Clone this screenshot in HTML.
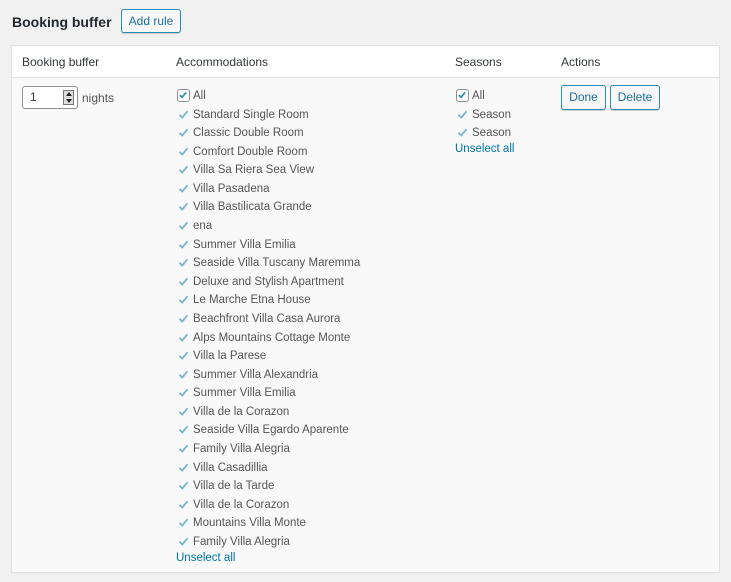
<!DOCTYPE html>
<html><head><meta charset="utf-8"><style>
*{box-sizing:border-box}
body{margin:0;width:731px;height:582px;background:#f1f1f1;font-family:"Liberation Sans",sans-serif;color:#444;position:relative;overflow:hidden}
.a{position:absolute;white-space:nowrap}
h1{position:absolute;left:12px;top:14px;margin:0;font-size:14px;font-weight:bold;color:#23282d;white-space:nowrap}
.btn{position:absolute;border:1px solid #2a8bb5;border-radius:3px;color:#1a6f98;background:#f7f7f7;font-size:12px;text-align:center;line-height:22px;box-shadow:0 1px 0 #ccc;white-space:nowrap}
.tbl{position:absolute;left:11px;top:45px;width:709px;height:528px;border:1px solid #e1e1e1;background:#f9f9f9;box-shadow:0 1px 1px rgba(0,0,0,.04)}
.hd{position:absolute;left:0;top:0;width:707px;height:32px;background:#fff;border-bottom:1px solid #e1e1e1}
.th{position:absolute;top:9px;font-size:12px;color:#32373c;white-space:nowrap}
.it{position:absolute;font-size:11.5px;color:#555;height:18px;line-height:18px;white-space:nowrap}
.cb{position:absolute;left:0;top:2px;width:13px;height:13px}
.cb.on{border:1px solid #8c8f94;border-radius:3px;background:#fff}
.it span{position:absolute;left:16px;white-space:nowrap}
.lnk{position:absolute;font-size:11.5px;color:#0073aa;white-space:nowrap}
</style></head><body>
<h1>Booking buffer</h1>
<div class="btn" style="left:121px;top:9px;width:60px;height:24px">Add rule</div>
<div class="tbl">
<div class="hd">
<div class="th" style="left:10px">Booking buffer</div>
<div class="th" style="left:164px">Accommodations</div>
<div class="th" style="left:443px">Seasons</div>
<div class="th" style="left:549px">Actions</div>
</div>
</div>
<div class="a" style="left:22px;top:86px;width:56px;height:23px;border:1px solid #8c8f94;border-radius:3px;background:#fff;font-size:12px;padding:3px 0 0 7px;color:#32373c">1
<div style="position:absolute;right:3px;top:3px;width:11px;height:15px;border:1px solid #777;background:#ddd">
<div style="position:absolute;left:2px;top:1px;border:3px solid transparent;border-bottom:4px solid #222;border-top:0"></div>
<div style="position:absolute;left:2px;top:8px;border:3px solid transparent;border-top:4px solid #222;border-bottom:0"></div>
</div></div>
<div class="a" style="left:82px;top:91px;font-size:12px;color:#555">nights</div>
<div id="acc"></div>
<div class="lnk" style="left:176px;top:552px">Unselect all</div>
<div class="lnk" style="left:455px;top:143px">Unselect all</div>
<div class="btn" style="left:561px;top:85px;width:45px;height:25px;line-height:23px">Done</div>
<div class="btn" style="left:610px;top:85px;width:50px;height:25px;line-height:23px">Delete</div>
<script>
var chk='<svg class="cb" viewBox="0 0 13 13"><path d="M2.5 6.8 L5.3 9.5 L10.5 3.2" stroke="#7ab6d4" stroke-width="1.8" fill="none"/></svg>';
var on='<div class="cb on"><svg viewBox="0 0 13 13" width="11" height="11" style="position:absolute;left:0;top:0"><path d="M2.2 6 L4.8 8.6 L9.6 2.8" stroke="#1e8cbe" stroke-width="2" fill="none"/></svg></div>';
var acc=["All","Standard Single Room","Classic Double Room","Comfort Double Room","Villa Sa Riera Sea View","Villa Pasadena","Villa Bastilicata Grande","ena","Summer Villa Emilia","Seaside Villa Tuscany Maremma","Deluxe and Stylish Apartment","Le Marche Etna House","Beachfront Villa Casa Aurora","Alps Mountains Cottage Monte","Villa la Parese","Summer Villa Alexandria","Summer Villa Emilia","Villa de la Corazon","Seaside Villa Egardo Aparente","Family Villa Alegria","Villa Casadillia","Villa de la Tarde","Villa de la Corazon","Mountains Villa Monte","Family Villa Alegria"];
var h='';
acc.forEach(function(t,i){h+='<div class="it" style="left:177px;top:'+(87+i*18.58)+'px">'+(i?chk:on)+'<span>'+t+'</span></div>';});
["All","Season","Season"].forEach(function(t,i){h+='<div class="it" style="left:456px;top:'+(87+i*18.58)+'px">'+(i?chk:on)+'<span>'+t+'</span></div>';});
document.getElementById('acc').innerHTML=h;
</script>
</body></html>
